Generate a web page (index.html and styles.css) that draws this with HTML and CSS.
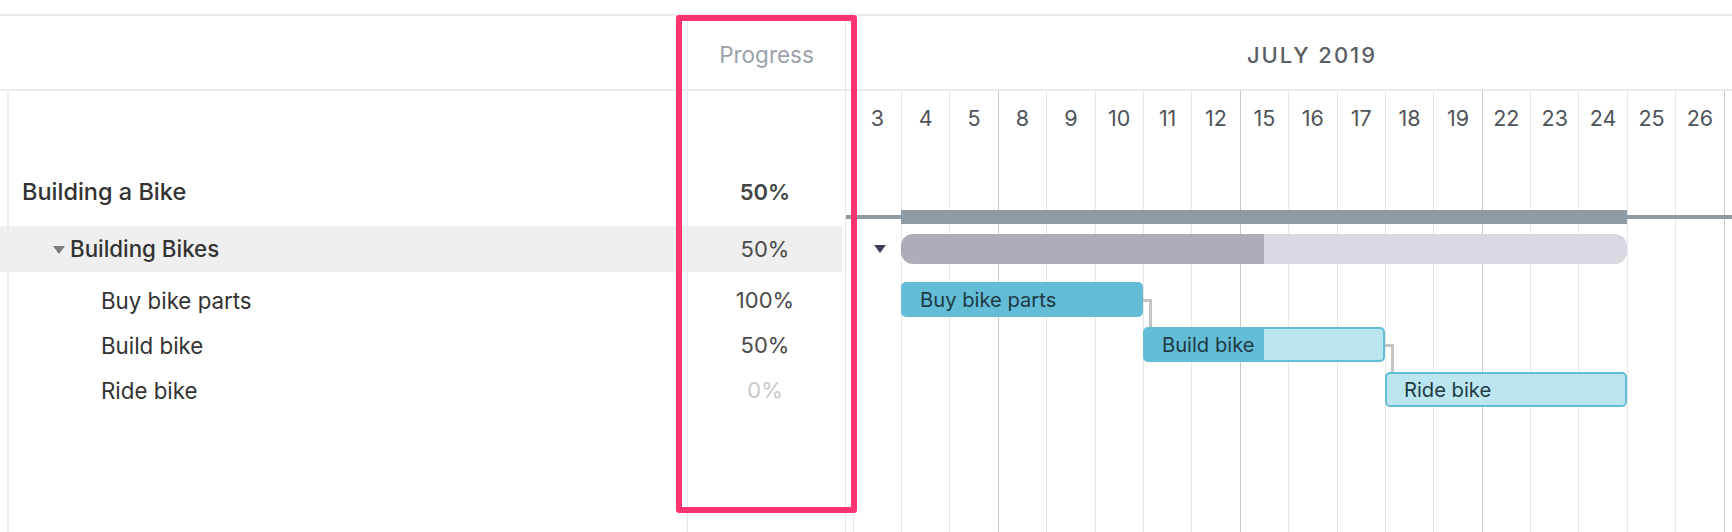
FILE: index.html
```html
<!DOCTYPE html>
<html lang="en">
<head>
    <meta charset="UTF-8">
    <meta name="viewport" content="width=device-width, initial-scale=1.0">
    <title>Building a Bike - Gantt</title>
    <link rel="stylesheet" href="styles.css">
</head>
<body>
    <div class="chart">
        <!-- task names -->
        <div class="col list-col">
            <div class="col-head"></div>
            <div class="col-body names">
                <div class="row row-project">Building a Bike</div>
                <div class="row row-group"><span class="caret"></span>Building Bikes</div>
                <div class="row row-task">Buy bike parts</div>
                <div class="row row-task">Build bike</div>
                <div class="row row-task">Ride bike</div>
            </div>
        </div>

        <!-- progress column -->
        <div class="col progress-col">
            <div class="col-head progress-head">Progress</div>
            <div class="col-body">
                <div class="row row-project">50%</div>
                <div class="row row-group">50%</div>
                <div class="row row-task">100%</div>
                <div class="row row-task">50%</div>
                <div class="row row-task empty">0%</div>
            </div>
        </div>

        <!-- timeline -->
        <div class="col gantt-col">
            <div class="col-head month">JULY 2019</div>
            <div class="timeline">
                <div class="days">
                    <div class="day first"></div>
                    <div class="day"><span>3</span></div>
                    <div class="day"><span>4</span></div>
                    <div class="day"><span>5</span></div>
                    <div class="day week"><span>8</span></div>
                    <div class="day"><span>9</span></div>
                    <div class="day"><span>10</span></div>
                    <div class="day"><span>11</span></div>
                    <div class="day"><span>12</span></div>
                    <div class="day week"><span>15</span></div>
                    <div class="day"><span>16</span></div>
                    <div class="day"><span>17</span></div>
                    <div class="day"><span>18</span></div>
                    <div class="day"><span>19</span></div>
                    <div class="day week"><span>22</span></div>
                    <div class="day"><span>23</span></div>
                    <div class="day"><span>24</span></div>
                    <div class="day"><span>25</span></div>
                    <div class="day"><span>26</span></div>
                    <div class="day week last"></div>
                </div>

                <div class="bars">
                    <div class="project-line"></div>
                    <div class="project-bar"></div>

                    <div class="group-caret"></div>
                    <div class="group-bar"></div>

                    <div class="task-bar task-done bar-buy">Buy bike parts</div>
                    <div class="link link-buy"></div>
                    <div class="task-bar task-half bar-build">Build bike</div>
                    <div class="link link-build"></div>
                    <div class="task-bar task-open bar-ride">Ride bike</div>
                </div>
            </div>
        </div>
    </div>

    <div class="highlight"></div>
</body>
</html>
```

FILE: styles.css
```css
html, body {
    height: 100%;
}
body {
    margin: 0;
    padding: 14px 0 0;
    box-sizing: border-box;
    position: relative;
    overflow: hidden;
    background: #fff;
    font-family: Inter, "Liberation Sans", sans-serif;
    color: #333;
}

.chart {
    display: flex;
    height: 100%;
    border-top: 2px solid #ebebeb;
}
.col {
    display: flex;
    flex-direction: column;
}
.col-head {
    height: 73px;
    flex-shrink: 0;
    border-bottom: 2px solid #ebebeb;
    box-sizing: content-box;
}
.col-body {
    flex: 1;
    padding-top: 78px;
}

/* left list */
.list-col {
    width: 687px;
}
.names {
    position: relative;
}
.names::before {
    content: '';
    position: absolute;
    left: 7px;
    top: 0;
    bottom: 0;
    width: 2px;
    background: #ebebeb;
}
.row {
    height: 45px;
    line-height: 45px;
    font-size: 22.3px;
    white-space: nowrap;
}
.row-project {
    height: 46px;
    line-height: 46px;
    margin-bottom: 11px;
    padding-left: 22px;
    font-size: 23.5px;
    font-weight: 500;
}
.row-group {
    height: 46px;
    line-height: 46px;
    margin-bottom: 6px;
    padding-left: 53px;
    background: #efefef;
    font-weight: 500;
    font-size: 22.3px;
}
.row-task {
    padding-left: 101px;
}
.caret {
    display: inline-block;
    width: 0;
    height: 0;
    border-left: 6px solid transparent;
    border-right: 6px solid transparent;
    border-top: 8px solid #7b7b7b;
    margin-right: 5px;
    vertical-align: 3px;
}

/* progress */
.progress-col {
    width: 159px;
    box-sizing: border-box;
    border-left: 1px solid #e6e6e6;
    border-right: 1px solid #e6e6e6;
}
.progress-head {
    text-align: center;
    font-size: 22.5px;
    color: #9aa1aa;
    line-height: 73px;
    padding-top: 2px;
    height: 71px;
}
.progress-col .row {
    padding-left: 0;
    margin-right: 3px;
    text-align: center;
    font-size: 22px;
    font-weight: 400;
    color: #4a4a4a;
}
.progress-col .row-project {
    font-weight: 600;
    color: #444;
}
.progress-col .empty {
    color: #c8c8c8;
}

/* timeline */
.gantt-col {
    flex: 1;
    min-width: 0;
}
.month {
    padding: 5px 0 0 46px;
    height: 68px;
    line-height: 68px;
    text-align: center;
    font-size: 22px;
    font-weight: 500;
    letter-spacing: 2px;
    color: #5a5e65;
}
.timeline {
    flex: 1;
    display: grid;
}
.days,
.bars {
    grid-area: 1 / 1;
}
.days {
    display: flex;
}
.day {
    width: 48.4px;
    flex-shrink: 0;
    box-sizing: border-box;
    border-left: 1px solid #e8e8e8;
    text-align: center;
    font-size: 21.5px;
    color: #4f535a;
}
.day.first {
    width: 6.6px;
    border-left: none;
}
.day.last {
    flex: 1;
}
.day.week {
    border-left-color: #c9c9c9;
}
.day span {
    display: block;
    height: 54px;
    line-height: 54px;
}

.bars {
    display: grid;
    grid-template-columns: 6.6px repeat(18, 48.4px) 1fr;
    grid-template-rows: 54px 65px 14px 10px 30px 18px 35px 10px 35px 10px 35px 1fr;
}
.project-line {
    grid-column: 1 / -1;
    grid-row: 3;
    align-self: center;
    height: 4px;
    background: #8f9ba4;
}
.project-bar {
    grid-column: 3 / 18;
    grid-row: 3;
    background: #8f9ba4;
}

.group-caret {
    grid-column: 2;
    grid-row: 5;
    align-self: center;
    justify-self: center;
    margin-left: 6px;
    width: 0;
    height: 0;
    border-left: 6px solid transparent;
    border-right: 6px solid transparent;
    border-top: 8px solid #3b3c5a;
}
.group-bar {
    grid-column: 3 / 18;
    grid-row: 5;
    border-radius: 12px;
    background: linear-gradient(to right, #adadb9 50%, #d8d8e1 50%);
}

.task-bar {
    box-sizing: border-box;
    border-radius: 5px;
    border: 2px solid #63bdd6;
    padding-left: 17px;
    font-size: 20.2px;
    line-height: 31px;
    color: #203a44;
    white-space: nowrap;
}
.task-done {
    background: #63bdd6;
}
.task-half {
    background: linear-gradient(to right, #63bdd6 50%, #bce6ef 50%);
}
.task-open {
    background: #bce6ef;
}
.bar-buy {
    grid-column: 3 / 8;
    grid-row: 7;
}
.bar-build {
    grid-column: 8 / 13;
    grid-row: 9;
}
.bar-ride {
    grid-column: 13 / 18;
    grid-row: 11;
}

/* dependency arrows */
.link {
    align-self: end;
    justify-self: start;
    width: 9px;
    height: 28px;
    box-sizing: border-box;
    border-top: 3px solid #c4c4c4;
    border-right: 3px solid #c4c4c4;
}
.link-buy {
    grid-column: 8;
    grid-row: 7 / 9;
}
.link-build {
    grid-column: 13;
    grid-row: 9 / 11;
}

/* annotation box */
.highlight {
    position: absolute;
    left: 676px;
    top: 15px;
    width: 181px;
    height: 498px;
    box-sizing: border-box;
    border: 6px solid #ff3370;
    border-radius: 3px;
}
```
